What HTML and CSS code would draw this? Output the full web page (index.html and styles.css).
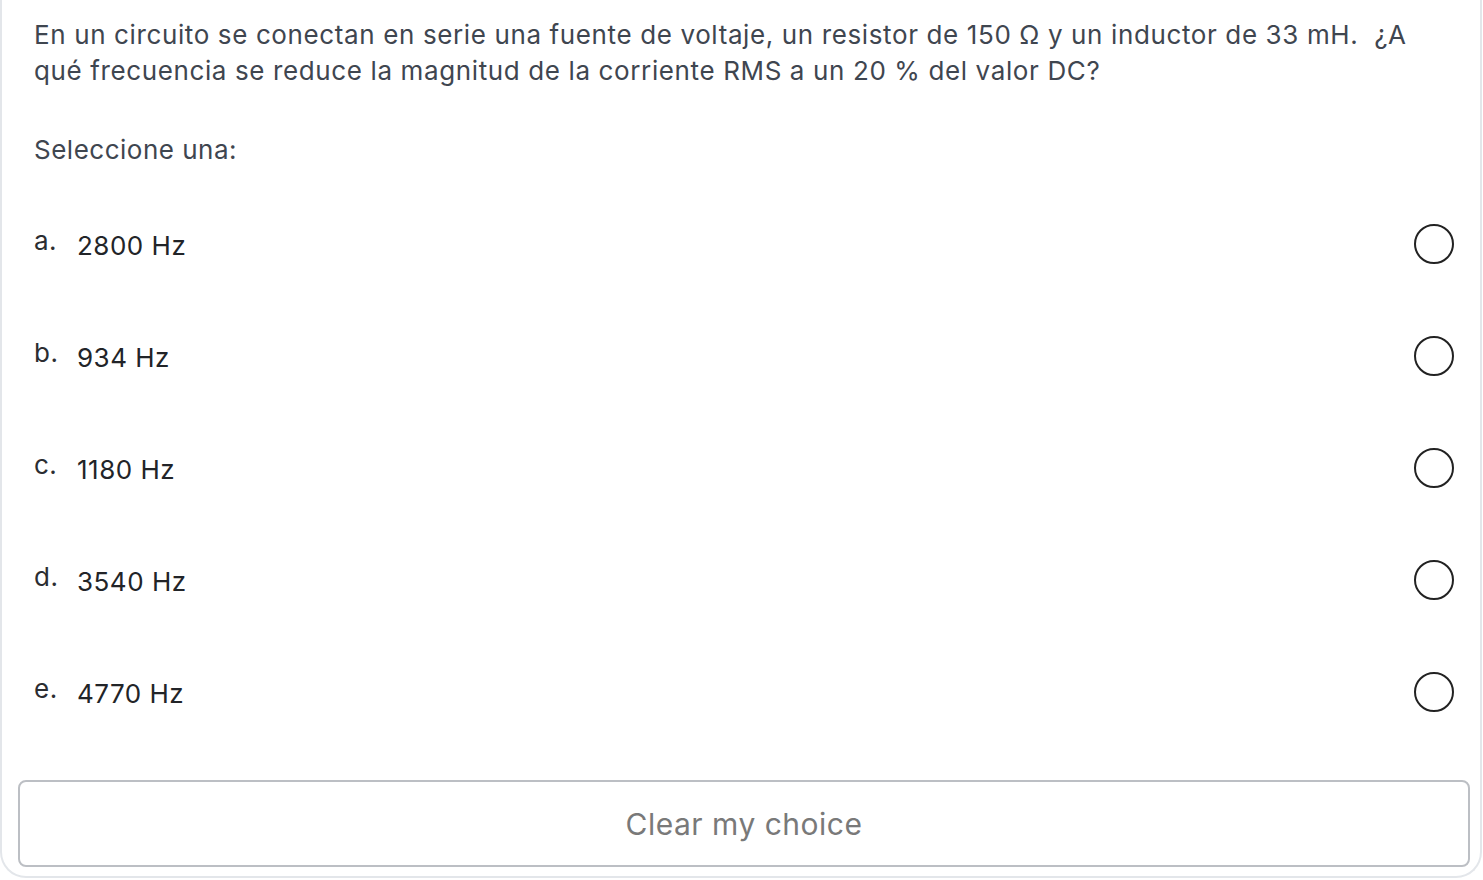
FILE: index.html
```html
<!DOCTYPE html>
<html lang="es">
<head>
<meta charset="utf-8">
<title>Pregunta</title>
<link rel="stylesheet" href="styles.css">
</head>
<body>
<div class="card">
  <div class="content">
    <p class="qtext">En un circuito se conectan en serie una fuente de voltaje, un resistor de 150 Ω y un inductor de 33 mH.&nbsp; ¿A qué frecuencia se reduce la magnitud de la corriente RMS a un 20 % del valor DC?</p>
    <p class="prompt">Seleccione una:</p>
    <div class="answers">
      <label class="opt"><span class="num">a.</span><span class="txt">2800 Hz</span><span class="radio"></span></label>
      <label class="opt"><span class="num">b.</span><span class="txt">934 Hz</span><span class="radio"></span></label>
      <label class="opt"><span class="num">c.</span><span class="txt">1180 Hz</span><span class="radio"></span></label>
      <label class="opt"><span class="num">d.</span><span class="txt">3540 Hz</span><span class="radio"></span></label>
      <label class="opt"><span class="num">e.</span><span class="txt">4770 Hz</span><span class="radio"></span></label>
    </div>
  </div>
  <button class="clear">Clear my choice</button>
</div>
</body>
</html>
```

FILE: styles.css
```css
html, body {
  margin: 0;
  padding: 0;
  background: #ffffff;
}
body {
  font-family: Inter, "Noto Sans", "Liberation Sans", sans-serif;
  width: 1483px;
  height: 880px;
  overflow: hidden;
}
.card {
  box-sizing: border-box;
  width: 1482px;
  height: 878px;
  border: 2px solid #e3e6ea;
  border-top: none;
  border-radius: 0 0 26px 26px;
  padding: 17px 11px 9px 16px;
  display: flex;
  flex-direction: column;
}
.content {
  padding-left: 16px;
  flex: 1;
}
.qtext {
  margin: 0;
  padding-right: 30px;
  font-size: 26px;
  line-height: 36px;
  color: #3f4650;
  letter-spacing: 0.62px;
}
.prompt {
  margin: 43px 0 0 0;
  font-size: 26px;
  line-height: 36px;
  color: #3f4650;
  letter-spacing: 0.5px;
}
.answers {
  margin-top: 20px;
  padding-right: 15px;
  display: flex;
  flex-direction: column;
}
.opt {
  height: 112px;
  display: flex;
  align-items: center;
  color: #222428;
  font-size: 26px;
  letter-spacing: 0.5px;
}
.num {
  width: 43px;
  color: #2b2d31;
  position: relative;
  top: -4px;
}
.txt {
  flex: 1;
  position: relative;
  top: 1px;
}
.radio {
  box-sizing: border-box;
  width: 40px;
  height: 40px;
  border: 2.5px solid #222222;
  border-radius: 50%;
}
.clear {
  box-sizing: border-box;
  height: 87px;
  width: 1452px;
  background: #ffffff;
  border: 2px solid #bcbfc4;
  border-radius: 8px;
  font-family: Inter, "Noto Sans", "Liberation Sans", sans-serif;
  font-size: 30px;
  letter-spacing: 0.5px;
  color: #797979;
  padding: 0;
}
```
